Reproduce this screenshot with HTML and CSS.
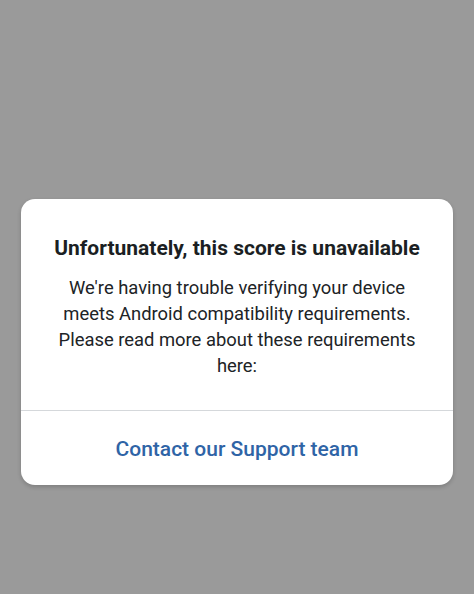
FILE: index.html
```html
<!DOCTYPE html>
<html>
<head>
<meta charset="utf-8">
<link rel="stylesheet" href="styles.css">
</head>
<body>
<div class="screen">
  <div class="dialog">
    <div class="content">
      <h1 class="title">Unfortunately, this score is unavailable</h1>
      <p class="message">We're having trouble verifying your device meets Android compatibility requirements. Please read more about these requirements here:</p>
    </div>
    <div class="divider"></div>
    <div class="action">Contact our Support team</div>
  </div>
</div>
</body>
</html>
```
FILE: styles.css
```css
html, body {
  margin: 0;
  padding: 0;
  background: #9a9a9a;
}
.screen {
  width: 474px;
  height: 594px;
  padding-top: 199px;
  box-sizing: border-box;
  font-family: Roboto, "Noto Sans", sans-serif;
}
.dialog {
  margin: 0 21px;
  background: #ffffff;
  border-radius: 14px;
  box-shadow: 0 2px 4px rgba(0,0,0,0.18);
  overflow: hidden;
}
.content {
  padding: 35px 16px 31px;
  text-align: center;
}
.title {
  margin: 0;
  font-size: 21px;
  font-weight: 700;
  color: #1b1f23;
  line-height: 28px;
}
.message {
  margin: 13px auto 0;
  max-width: 368px;
  font-size: 18.4px;
  line-height: 26px;
  color: #202326;
}
.divider {
  height: 1px;
  background: #d5d8db;
}
.action {
  text-align: center;
  padding: 24px 0 22px;
  font-size: 21px;
  line-height: 28px;
  font-weight: 500;
  color: #2f64a6;
}
```
